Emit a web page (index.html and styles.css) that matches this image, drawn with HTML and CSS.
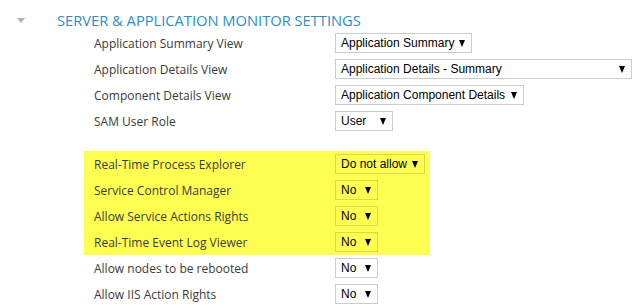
FILE: index.html
```html
<!DOCTYPE html>
<html lang="en">
<head>
    <meta charset="UTF-8">
    <title>Server &amp; Application Monitor Settings</title>
    <link rel="stylesheet" href="styles.css">
</head>
<body>

    <div class="section-head">
        <span class="toggle"></span>
        <h2>SERVER &amp; APPLICATION MONITOR SETTINGS</h2>
    </div>

    <div class="settings">
        <div class="group">
            <div class="row">
                <span class="label">Application Summary View</span>
                <span class="select w-summary">Application Summary <i class="arrow"></i></span>
            </div>
            <div class="row">
                <span class="label">Application Details View</span>
                <span class="select w-wide">Application Details - Summary <i class="arrow"></i></span>
            </div>
            <div class="row">
                <span class="label">Component Details View</span>
                <span class="select w-component">Application Component Details <i class="arrow"></i></span>
            </div>
            <div class="row">
                <span class="label">SAM User Role</span>
                <span class="select w-user">User <i class="arrow"></i></span>
            </div>
        </div>

        <div class="group highlight">
            <div class="row">
                <span class="label">Real-Time Process Explorer</span>
                <span class="select w-deny">Do not allow <i class="arrow"></i></span>
            </div>
            <div class="row">
                <span class="label">Service Control Manager</span>
                <span class="select w-no">No <i class="arrow"></i></span>
            </div>
            <div class="row">
                <span class="label">Allow Service Actions Rights</span>
                <span class="select w-no">No <i class="arrow"></i></span>
            </div>
            <div class="row">
                <span class="label">Real-Time Event Log Viewer</span>
                <span class="select w-no">No <i class="arrow"></i></span>
            </div>
        </div>

        <div class="group">
            <div class="row">
                <span class="label">Allow nodes to be rebooted</span>
                <span class="select w-no">No <i class="arrow"></i></span>
            </div>
            <div class="row">
                <span class="label">Allow IIS Action Rights</span>
                <span class="select w-no">No <i class="arrow"></i></span>
            </div>
        </div>
    </div>

</body>
</html>
```

FILE: styles.css
```css
body {
    font-family: "Open Sans", sans-serif;
    background-color: white;
    margin: 0;
    padding: 0;
}

.section-head {
    display: flex;
    align-items: center;
    height: 30px;
    padding-top: 10px;
    box-sizing: border-box;
}

.toggle {
    width: 0;
    height: 0;
    margin-left: 17px;
    border-left: 4.5px solid transparent;
    border-right: 4.5px solid transparent;
    border-top: 5px solid #b3b3b3;
}

h2 {
    margin: 0 0 0 32px;
    font-size: 14.7px;
    font-weight: normal;
    line-height: 20px;
    color: #2a8fc4;
    white-space: nowrap;
}

.settings {
    padding-left: 84px;
}

.highlight {
    width: 346px;
    margin-top: 17px;
    background-color: #ffff52;
}

.row {
    display: flex;
    align-items: center;
    height: 26px;
    padding-left: 10px;
}

.label {
    flex-shrink: 0;
    width: 241px;
    font-size: 12px;
    color: #3a3a3a;
    white-space: nowrap;
}

.select {
    display: flex;
    align-items: center;
    justify-content: space-between;
    flex-shrink: 0;
    height: 20px;
    padding: 0 6px 0 5px;
    box-sizing: border-box;
    border: 1px solid #cccccc;
    background-color: white;
    font-family: "Liberation Sans", Arial, sans-serif;
    font-size: 12px;
    color: #000;
    white-space: nowrap;
}

.highlight .select {
    background-color: transparent;
    border-color: #d8d84a;
}

.arrow {
    width: 0;
    height: 0;
    border-left: 3.5px solid transparent;
    border-right: 3.5px solid transparent;
    border-top: 7px solid #000;
}

.w-no { width: 43px; }
.w-user { width: 58px; }
.w-deny { width: 90px; }
.w-summary { width: 137px; }
.w-component { width: 189px; }
.w-wide { width: 297px; }
```
